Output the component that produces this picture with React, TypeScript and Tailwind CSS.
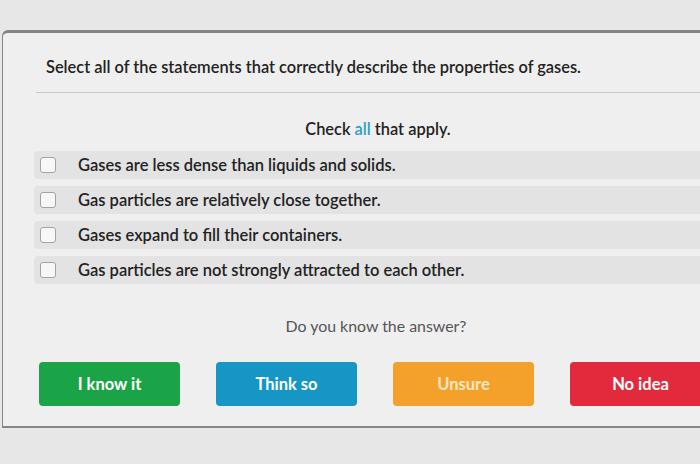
const options = [
  "Gases are less dense than liquids and solids.",
  "Gas particles are relatively close together.",
  "Gases expand to fill their containers.",
  "Gas particles are not strongly attracted to each other.",
];

const answers = [
  { label: "I know it", className: "bg-[#1ba447] text-white" },
  { label: "Think so", className: "bg-[#1596c4] text-white" },
  { label: "Unsure", className: "bg-[#f4a12c] text-[#fbe6c6]" },
  { label: "No idea", className: "bg-[#e32a3d] text-white" },
];

export default function App() {
  return (
    <div
      className="w-[700px] h-[464px] overflow-hidden bg-[#e7e7e7] pt-[30px]"
      style={{ fontFamily: "Lato, 'Liberation Sans', sans-serif" }}
    >
      <div className="ml-[2px] w-[720px] h-[398px] bg-[#efefef] border-t-[3px] border-l border-b-2 border-[#858585] rounded-tl-md">
        <div className="w-[698px]">
          <p className="pl-[43px] pt-[24px] text-[16.4px] leading-[20px] font-semibold text-[#222]">
            Select all of the statements that correctly describe the properties of gases.
          </p>
          <div className="ml-[33px] mt-[15px] border-t border-[#c9c9c9]" />

          <p className="pl-[52px] mt-[26px] text-center text-[16.4px] leading-[20px] font-semibold text-[#222]">
            Check <span className="text-[#2a9fc9]">all</span> that apply.
          </p>

          <ul className="mt-[12px] flex flex-col gap-[7px]">
            {options.map((o) => (
              <li
                key={o}
                className="ml-[31px] h-[28px] flex items-center bg-[#e3e3e3] rounded-l-sm"
              >
                <span className="ml-[6px] w-[16px] h-[16px] shrink-0 rounded-[3px] border border-[#a3a3a3] bg-[#f7f7f7]" />
                <span className="ml-[22px] text-[16.5px] leading-[20px] font-semibold text-[#222]">
                  {o}
                </span>
              </li>
            ))}
          </ul>

          <p className="pl-[48px] mt-[32px] text-center text-[15.9px] leading-[20px] text-[#555]">
            Do you know the answer?
          </p>

          <div className="mt-[26px] pl-[36px] flex gap-[36px]">
            {answers.map((a) => (
              <button
                key={a.label}
                className={`w-[141px] h-[44px] shrink-0 rounded-[4px] text-[16.5px] font-bold ${a.className}`}
              >
                {a.label}
              </button>
            ))}
          </div>
        </div>
      </div>
    </div>
  );
}
